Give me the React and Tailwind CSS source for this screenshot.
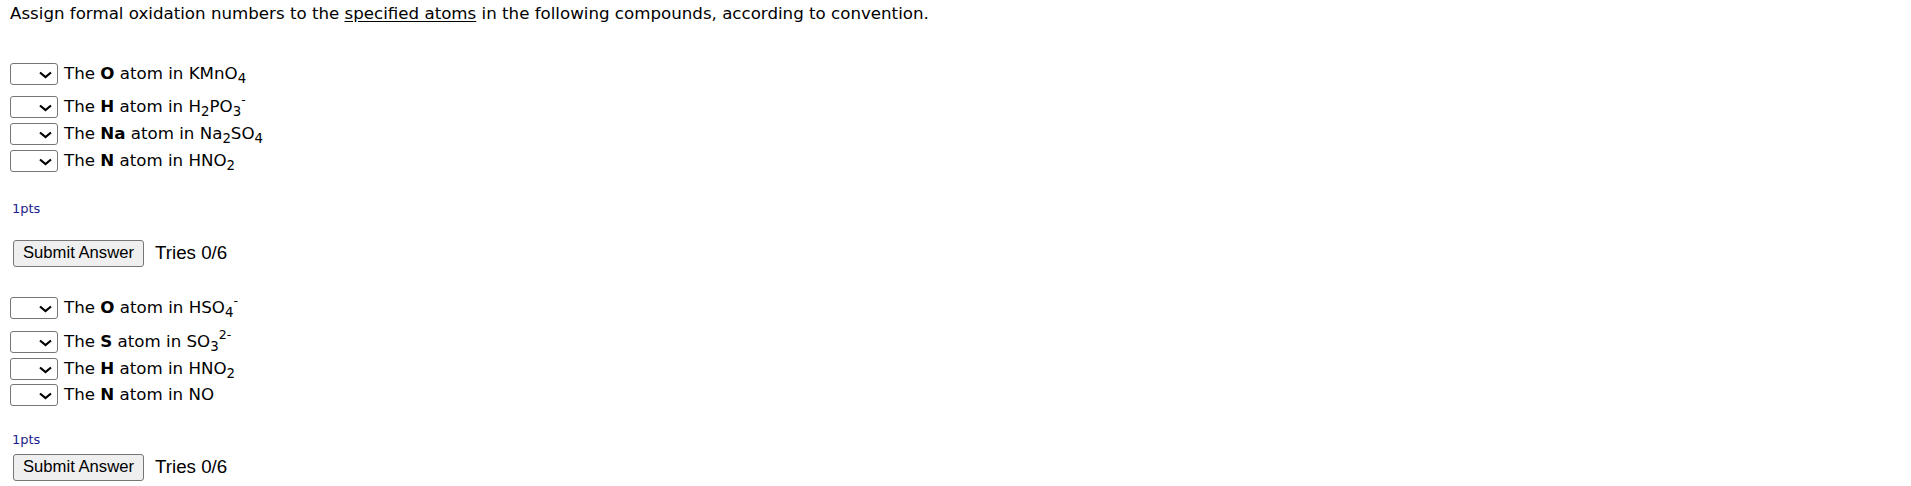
import React from "react";

const Chevron = () => (
    <svg width="13" height="8" viewBox="0 0 13 8" className="absolute right-[5px] top-[7px]">
        <path d="M1 1.5 L6.5 6 L12 1.5" fill="none" stroke="#000" strokeWidth="2.2" />
    </svg>
);

const Dropdown = () => (
    <div className="relative w-[48px] h-[22px] shrink-0 bg-white border border-[#767676] rounded-[3px]">
        <Chevron />
    </div>
);

const Sub = ({ children }) => (
    <span className="relative top-[4px] text-[80%] leading-none">{children}</span>
);

const Sup = ({ children }) => (
    <span className="relative top-[-8px] text-[75%] leading-none">{children}</span>
);

const Fila = ({ atomo, children, mt }) => (
    <div className={`flex items-center h-[22px] gap-[6px] ${mt}`}>
        <Dropdown />
        <span className="leading-none whitespace-nowrap">
            The <b>{atomo}</b> atom in {children}
        </span>
    </div>
);

const Envio = () => (
    <div className="flex items-center h-[27px] ml-[3px] gap-[11px]">
        <button className="h-[27px] w-[131px] bg-[#efefef] border border-[#767676] rounded-[3px] text-[16.67px] text-black font-['Liberation_Sans',Arial,sans-serif] leading-none">
            Submit Answer
        </button>
        <span className="text-[18.75px] font-['Liberation_Sans',Arial,sans-serif] leading-none">Tries 0/6</span>
    </div>
);

const Puntos = ({ mt }) => (
    <div className={`h-[16px] leading-[16px] text-[13px] text-[#1c1c8c] ml-[2px] ${mt}`}>1pts</div>
);

export default function App() {
    return (
        <div className="min-h-[486px] bg-white text-black pl-[10px] pt-[4px] text-[16.67px] font-['DejaVu_Sans',Verdana,sans-serif]">
            <p className="leading-[20px] whitespace-nowrap">
                Assign formal oxidation numbers to the{" "}
                <span className="underline underline-offset-2">specified atoms</span> in the following compounds,
                according to convention.
            </p>

            {/* primer grupo */}
            <div className="flex flex-col">
                <Fila atomo="O" mt="mt-[39px]">KMnO<Sub>4</Sub></Fila>
                <Fila atomo="H" mt="mt-[11px]">H<Sub>2</Sub>PO<Sub>3</Sub><Sup>-</Sup></Fila>
                <Fila atomo="Na" mt="mt-[5px]">Na<Sub>2</Sub>SO<Sub>4</Sub></Fila>
                <Fila atomo="N" mt="mt-[5px]">HNO<Sub>2</Sub></Fila>
            </div>
            <Puntos mt="mt-[29px]" />
            <div className="mt-[23px]">
                <Envio />
            </div>

            {/* segundo grupo */}
            <div className="flex flex-col mt-[30px]">
                <Fila atomo="O" mt="">HSO<Sub>4</Sub><Sup>-</Sup></Fila>
                <Fila atomo="S" mt="mt-[12px]">SO<Sub>3</Sub><Sup>2-</Sup></Fila>
                <Fila atomo="H" mt="mt-[5px]">HNO<Sub>2</Sub></Fila>
                <Fila atomo="N" mt="mt-[4px]">NO</Fila>
            </div>
            <Puntos mt="mt-[26px]" />
            <div className="mt-[6px]">
                <Envio />
            </div>
        </div>
    );
}
